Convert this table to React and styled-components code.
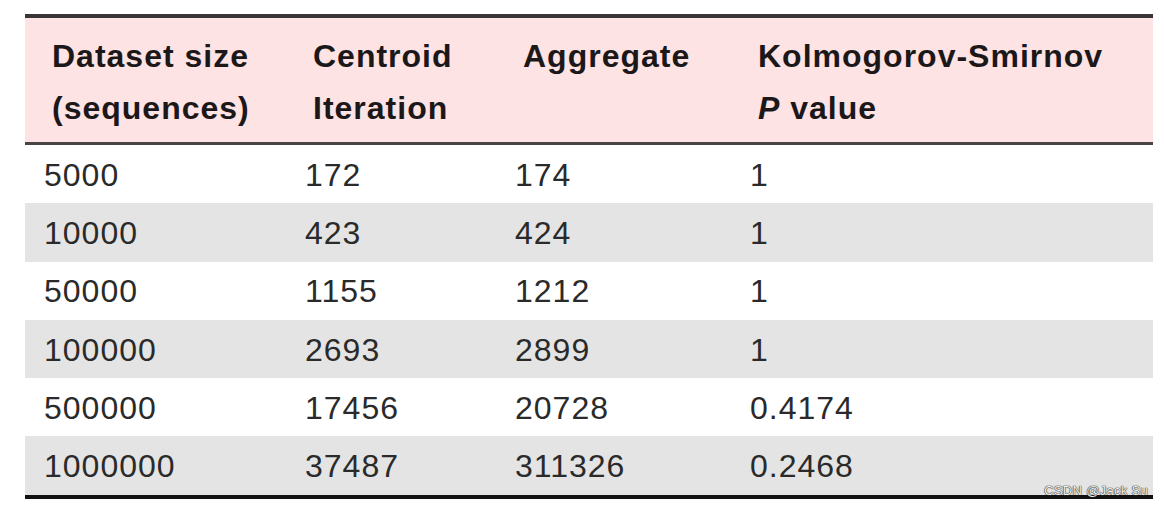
import React from "react";
import styled, { createGlobalStyle } from "styled-components";

const GlobalStyle = createGlobalStyle`
  html, body {
    margin: 0;
    padding: 0;
    background: #ffffff;
  }
  body {
    font-family: "Liberation Sans", Arial, sans-serif;
  }
`;

const rows = [
  ["5000", "172", "174", "1"],
  ["10000", "423", "424", "1"],
  ["50000", "1155", "1212", "1"],
  ["100000", "2693", "2899", "1"],
  ["500000", "17456", "20728", "0.4174"],
  ["1000000", "37487", "311326", "0.2468"],
];

const App = () => {
  return (
    <>
      <GlobalStyle />
      <Page>
        <Table>
          <HeaderRow>
            <HeadCell>
              Dataset size
              <br />
              (sequences)
            </HeadCell>
            <HeadCell>
              Centroid
              <br />
              Iteration
            </HeadCell>
            <HeadCell>Aggregate</HeadCell>
            <HeadCell>
              Kolmogorov-Smirnov
              <br />
              <Italic>P</Italic> value
            </HeadCell>
          </HeaderRow>
          {rows.map((row, i) => (
            <Row key={row[0]} shaded={i % 2 === 1}>
              {row.map((val, j) => (
                <Cell key={j}>{val}</Cell>
              ))}
            </Row>
          ))}
          <Watermark>CSDN @Jack Su</Watermark>
        </Table>
      </Page>
    </>
  );
};

export default App;

const Page = styled.div`
  width: 1164px;
  height: 512px;
  padding: 14px 11px 0 25px;
  box-sizing: border-box;
`;

const Table = styled.div`
  position: relative;
  width: 1128px;
  border-top: 4px solid #3a3536;
  border-bottom: 4px solid #111111;
`;

const columns = "261px 210px 235px 1fr";

const HeaderRow = styled.div`
  display: grid;
  grid-template-columns: ${columns};
  height: 127px;
  padding: 12px 0 8px;
  box-sizing: border-box;
  background: #fde3e3;
  border-bottom: 3px solid #4a4344;
`;

const HeadCell = styled.div`
  padding-left: 27px;
  font-size: 32px;
  font-weight: bold;
  letter-spacing: 1px;
  line-height: 52px;
  color: #1c1718;
  white-space: nowrap;
`;

const Italic = styled.i`
  font-style: italic;
`;

const Row = styled.div`
  display: grid;
  grid-template-columns: ${columns};
  align-items: center;
  height: 58.3px;
  background: ${(p) => (p.shaded ? "#e4e4e4" : "#ffffff")};
`;

const Cell = styled.div`
  padding-left: 19px;
  padding-top: 2px;
  font-size: 32px;
  letter-spacing: 1px;
  color: #2a2a2a;
  white-space: nowrap;
`;

const Watermark = styled.div`
  position: absolute;
  right: 5px;
  bottom: -3px;
  font-size: 13px;
  letter-spacing: 0.3px;
  color: #f4f4f4;
  text-shadow: 0 0 1px #333, 0 0 1px #333, 0 0 1px #333;
`;
